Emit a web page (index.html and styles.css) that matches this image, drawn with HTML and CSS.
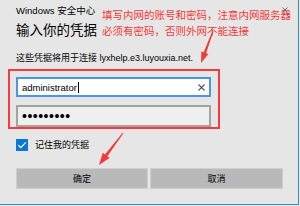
FILE: index.html
```html
<!DOCTYPE html>
<html lang="zh-CN">
<head>
<meta charset="utf-8">
<title>Windows 安全中心</title>
<link rel="stylesheet" href="styles.css">
</head>
<body>
<div class="dialog">
  <div class="titlebar">
    <span class="app">Windows 安全中心</span>
    <svg class="close" width="6" height="6" viewBox="0 0 6 6"><path d="M0.5 0.5L5.5 5.5M5.5 0.5L0.5 5.5" stroke="#666" stroke-width="1"/></svg>
  </div>
  <h1 class="title">输入你的凭据</h1>
  <p class="desc">这些凭据将用于连接 lyxhelp.e3.luyouxia.net.</p>
  <div class="mark">
    <div class="field user">
      <span class="val">administrator</span><span class="caret"></span>
      <svg class="clear" width="7" height="7" viewBox="0 0 7 7"><path d="M0.5 0.5L6.5 6.5M6.5 0.5L0.5 6.5" stroke="#555" stroke-width="1.1"/></svg>
    </div>
    <div class="field pass"><span class="dots">•••••••••</span></div>
  </div>
  <div class="remember">
    <span class="check"><svg width="12" height="12" viewBox="0 0 12 12"><path d="M2.3 6.2L4.8 8.7L9.8 3.4" fill="none" stroke="#fff" stroke-width="1.2"/></svg></span>
    <span class="label">记住我的凭据</span>
  </div>
  <div class="buttons">
    <div class="btn">确定</div>
    <div class="btn">取消</div>
  </div>
  <div class="note">填写内网的账号和密码，注意内网服务器<br>必须有密码，否则外网不能连接</div>
  <svg class="arrows" width="298" height="204" viewBox="0 0 298 204">
    <polygon points="213.5,31.2 206.1,53.2 208.4,54.0 201,63 201.4,51.4 203.7,52.2 212.5,30.8" fill="#f23a3a"/>
    <polygon points="123.4,133.3 107.4,156.3 109.6,158.0 99,165 102.8,152.8 105.0,154.5 122.6,132.7" fill="#f23a3a"/>
  </svg>
</div>
</body>
</html>
```
FILE: styles.css
```css
html, body {
  margin: 0;
  padding: 0;
  background: #f0f0f0;
}
body {
  font-family: "Liberation Sans", "Noto Sans CJK SC", sans-serif;
  color: #000;
}
.dialog {
  position: relative;
  box-sizing: border-box;
  width: 299px;
  height: 205px;
  padding: 0 15px 0 16px;
  background: #e6e6e6;
  border-right: 1px solid #2f87d8;
  border-bottom: 1px solid #2f87d8;
  display: flex;
  flex-direction: column;
}
.titlebar {
  display: flex;
  justify-content: space-between;
  align-items: flex-start;
  padding-top: 4px;
  height: 14px;
}
.app {
  font-size: 9.5px;
  line-height: 14px;
}
.close {
  margin-top: 3px;
  margin-right: -5px;
}
.title {
  margin: 4px 0 0;
  font-size: 13.5px;
  line-height: 18px;
  font-weight: normal;
}
.desc {
  margin: 12px 0 0;
  font-size: 9px;
  line-height: 13px;
}
.mark {
  margin: 4px 0 0 -8px;
  box-sizing: border-box;
  width: 212px;
  height: 60px;
  border: 2px solid #f43c3c;
  padding: 6px 7px 0 6px;
  display: flex;
  flex-direction: column;
  gap: 8px;
}
.field {
  box-sizing: border-box;
  width: 195px;
  border: 2px solid #999;
  display: flex;
  align-items: center;
  padding-left: 4px;
}
.user {
  height: 20px;
  background: #fff;
  border-color: #4a96e0;
  padding-right: 4px;
}
.val {
  font-size: 9.5px;
}
.caret {
  width: 1px;
  height: 11px;
  background: #000;
  margin-left: 1px;
}
.clear {
  margin-left: auto;
}
.pass {
  height: 22px;
  background: #efefef;
  border-color: #a3a3a3;
}
.dots {
  font-size: 14px;
  letter-spacing: 0.5px;
  line-height: 14px;
}
.remember {
  margin-top: 10px;
  display: flex;
  align-items: center;
  gap: 7px;
  height: 12px;
}
.check {
  width: 12px;
  height: 12px;
  background: #0a78d4;
  display: flex;
}
.label {
  font-size: 9px;
  line-height: 12px;
}
.buttons {
  margin-top: 17px;
  display: flex;
  gap: 2px;
}
.btn {
  box-sizing: border-box;
  height: 21px;
  width: 132px;
  background: #b9b9b9;
  border: 1px solid #cfcfcf;
  display: flex;
  align-items: center;
  justify-content: center;
  font-size: 9px;
}
.btn + .btn {
  width: 133px;
}
.note {
  position: absolute;
  left: 102px;
  top: 7px;
  font-size: 10.5px;
  line-height: 16px;
  color: #f03a3a;
  white-space: nowrap;
}
.arrows {
  position: absolute;
  left: 0;
  top: 0;
  pointer-events: none;
}
```
